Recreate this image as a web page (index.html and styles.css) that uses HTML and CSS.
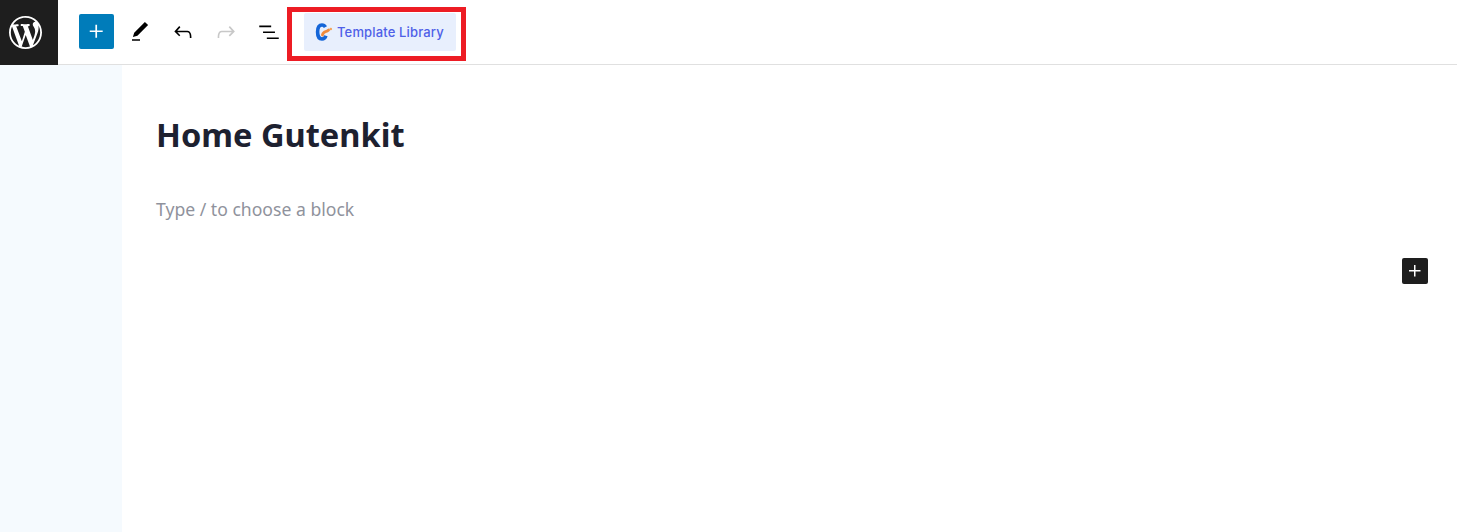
FILE: index.html
```html
<!DOCTYPE html>
<html lang="en">
<head>
<meta charset="UTF-8" />
<title>Edit Page - Home Gutenkit</title>
<link rel="stylesheet" href="styles.css">
</head>
<body>

<div class="topbar">
  <a class="wp-logo" href="#">
    <svg width="33" height="33" viewBox="0 0 20 20"><path fill="#fff" d="M20 10c0-5.51-4.49-10-10-10C4.48 0 0 4.49 0 10c0 5.52 4.48 10 10 10 5.51 0 10-4.48 10-10zM7.78 15.37L4.37 6.22c.55-.02 1.17-.08 1.17-.08.5-.06.44-1.13-.06-1.11 0 0-1.45.11-2.37.11-.18 0-.37 0-.58-.01C4.12 2.69 6.87 1.11 10 1.11c2.33 0 4.45.87 6.05 2.34-.68-.11-1.65.39-1.65 1.58 0 .74.45 1.36.9 2.1.35.61.55 1.36.55 2.46 0 1.49-1.4 5-1.4 5l-3.03-8.37c.54-.02.82-.17.82-.17.5-.05.44-1.25-.06-1.22 0 0-1.44.12-2.38.12-.87 0-2.33-.12-2.33-.12-.5-.03-.56 1.2-.06 1.22l.92.08 1.26 3.41zM17.41 10c.24-.64.74-1.87.43-4.25.7 1.29 1.05 2.71 1.05 4.25 0 3.29-1.73 6.24-4.4 7.78.97-2.59 1.94-5.2 2.92-7.78zM6.1 18.09C3.12 16.65 1.11 13.53 1.11 10c0-1.3.23-2.48.72-3.59C3.25 10.3 4.67 14.2 6.1 18.09zm4.03-6.63l2.58 6.98c-.86.29-1.76.45-2.71.45-.79 0-1.57-.11-2.29-.33.81-2.38 1.62-4.74 2.42-7.1z"/></svg>
  </a>

  <div class="tools">
    <button class="btn-add">
      <svg width="27" height="27" viewBox="0 0 24 24"><path fill="#fff" d="M11 12.5V17.5H12.5V12.5H17.5V11H12.5V6H11V11H6V12.5H11Z"/></svg>
    </button>
    <button class="tool">
      <svg width="24" height="24" viewBox="0 0 24 24"><path d="M20.1 5.1L16.9 2 6.2 12.7l-1.3 4.4 4.5-1.3L20.1 5.1zM4 20.8h8v-1.5H4v1.5z"/></svg>
    </button>
    <button class="tool">
      <svg width="26" height="26" viewBox="0 0 24 24"><path d="M18.3 11.7c-.6-.6-1.4-.9-2.3-.9H6.7l2.9-3.3-1.1-1-4.5 5L8.5 16l1-1-2.7-2.7H16c.5 0 .9.2 1.3.5 1 1 1 3.4 1 4.5v.3h1.5v-.2c0-1.5 0-4.3-1.5-5.7z"/></svg>
    </button>
    <button class="tool disabled">
      <svg width="26" height="26" viewBox="0 0 24 24"><path d="M15.6 6.5l-1.1 1 2.9 3.3H8c-.9 0-1.7.3-2.3.9-1.4 1.500-1.4 4.200-1.4 5.600v.2h1.500v-.3c0-1.100 0-3.500 1-4.500.3-.3.7-.5 1.300-.5h9.200L14.500 15l1.100 1.100 4.600-4.600-4.600-5z"/></svg>
    </button>
    <button class="tool">
      <svg width="26" height="26" viewBox="0 0 24 24"><path d="M3 6h11v1.500H3V6zm3.500 5.500h11V13h-11v-1.500zM10 17h11v1.500H10V17z"/></svg>
    </button>
  </div>

  <!-- Red outline from the screenshot's annotation -->
  <div class="highlight">
    <button class="btn-library">
      <svg width="18" height="18" viewBox="0 0 18 18">
        <path fill="none" stroke="#1465d8" stroke-width="3.600" d="M10.400 4.200C9.600 2.700 8.400 2 7 2 4 2 2.600 5 2.600 9s1.400 7 4.400 7c2.100 0 3.300-1.200 3.900-3.200"/>
        <path fill="none" stroke="#ef8a3c" stroke-width="2.800" stroke-linecap="round" d="M7.400 12c.7-2.100 1.800-3 3.200-3.300 1.300-.3 2.100-.7 3-1.700"/>
        <circle cx="15.800" cy="6" r="1.300" fill="#f3a55c"/>
      </svg>
      Template Library
    </button>
  </div>
</div>

<div class="editor">
  <div class="side-strip"></div>
  <div class="canvas">
    <h1 class="post-title">Home Gutenkit</h1>
    <p class="placeholder">Type / to choose a block</p>
    <button class="btn-inserter">
      <svg width="24" height="24" viewBox="0 0 24 24"><path fill="#fff" d="M11 12.500V17.500H12.500V12.500H17.500V11H12.500V6H11V11H6V12.500H11Z"/></svg>
    </button>
  </div>
</div>

</body>
</html>
```

FILE: styles.css
```css
* {
  box-sizing: border-box;
}
html, body {
  height: 100%;
}
body {
  margin: 0;
  font-family: 'Noto Sans', 'Open Sans', sans-serif;
  background-color: #fff;
  color: #1e1e1e;
  display: flex;
  flex-direction: column;
  overflow: hidden;
}
button {
  border: none;
  background: none;
  padding: 0;
  cursor: pointer;
}

/* Top bar */
.topbar {
  height: 65px;
  flex-shrink: 0;
  display: flex;
  align-items: flex-start;
  border-bottom: 1px solid #e0e0e0;
}
.wp-logo {
  width: 58px;
  height: 65px;
  background-color: #1e1e1e;
  display: flex;
  align-items: center;
  padding-left: 9px;
}
.tools {
  display: flex;
  align-items: center;
  margin-left: 21px;
  margin-top: 14px;
}
.btn-add {
  width: 35px;
  height: 35px;
  background-color: #007cba;
  border-radius: 2px;
  display: flex;
  align-items: center;
  justify-content: center;
  margin-right: 8px;
}
.tool {
  width: 35px;
  height: 35px;
  display: flex;
  align-items: center;
  justify-content: center;
  margin-right: 8px;
}
.tool:last-child {
  margin-right: 0;
}
.tool.disabled svg {
  fill: #c8c8c8;
}

/* Template Library */
.highlight {
  width: 179px;
  height: 54px;
  margin-top: 7px;
  margin-left: 1px;
  border: 5px solid #ed1c24;
  padding: 1px 5px 0 12px;
  display: flex;
  align-items: flex-start;
}
.btn-library {
  width: 152px;
  height: 38px;
  background-color: #e8effd;
  border-radius: 2px;
  color: #4f5fe8;
  font-family: 'Inter', sans-serif;
  font-size: 13px;
  font-weight: 500;
  letter-spacing: 0.15px;
  display: flex;
  align-items: center;
  gap: 4px;
  padding-left: 11px;
  white-space: nowrap;
}

/* Editor */
.editor {
  flex-grow: 1;
  display: flex;
}
.side-strip {
  width: 122px;
  background-color: #f5fafe;
}
.canvas {
  flex-grow: 1;
  display: flex;
  flex-direction: column;
  padding: 50px 29px 0 34px;
}
.post-title {
  margin: 0;
  font-size: 32.6px;
  line-height: 40px;
  font-weight: 700;
  color: #1d2130;
}
.placeholder {
  margin: 42px 0 0;
  font-size: 17.6px;
  line-height: 24px;
  color: #8f929c;
}
.btn-inserter {
  width: 26px;
  height: 26px;
  margin-top: 37px;
  align-self: flex-end;
  background-color: #1e1e1e;
  border-radius: 2px;
  display: flex;
  align-items: center;
  justify-content: center;
}
```
